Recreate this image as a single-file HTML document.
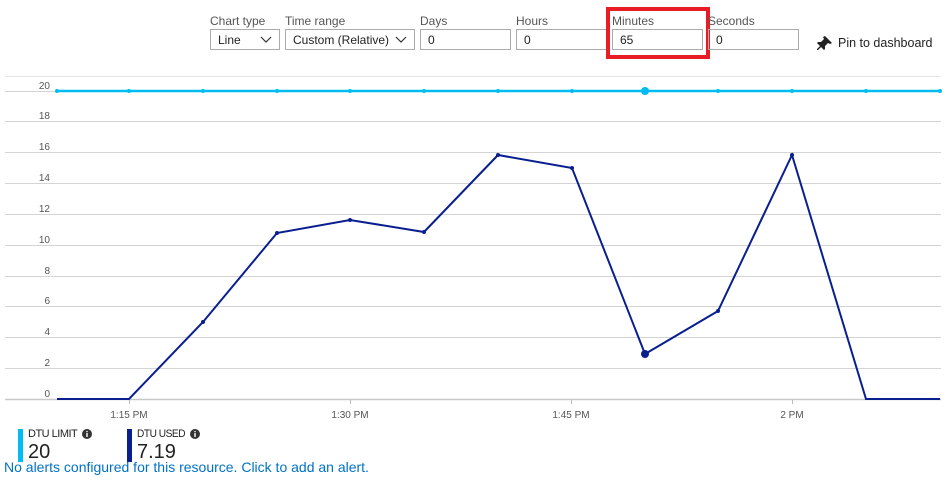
<!DOCTYPE html>
<html><head><meta charset="utf-8"><style>
body{margin:0;width:946px;height:486px;background:#fff;font-family:"Liberation Sans",sans-serif;position:relative;overflow:hidden}
.lbl{position:absolute;top:14px;font-size:12px;color:#555}
.box{position:absolute;top:29px;height:21px;border:1px solid #ababab;box-sizing:border-box;font-size:12px;color:#222;padding:3px 0 0 7px}
.chev{position:absolute;right:7px;top:4px}
</style></head><body>
<div class="lbl" style="left:210px">Chart type</div>
<div class="box" style="left:210px;width:70px">Line<svg class="chev" width="12" height="10"><path d="M1 3l5 5 5-5" fill="none" stroke="#333" stroke-width="1.2"/></svg></div>
<div class="lbl" style="left:285px">Time range</div>
<div class="box" style="left:285px;width:130px">Custom (Relative)<svg class="chev" width="12" height="10"><path d="M1 3l5 5 5-5" fill="none" stroke="#333" stroke-width="1.2"/></svg></div>
<div class="lbl" style="left:420px">Days</div>
<div class="box" style="left:420px;width:91px">0</div>
<div class="lbl" style="left:516px">Hours</div>
<div class="box" style="left:516px;width:91px">0</div>
<div class="lbl" style="left:612px">Minutes</div>
<div class="box" style="left:612px;width:91px">65</div>
<div style="position:absolute;left:606px;top:7px;width:104px;height:52px;border:4px solid #e81c24;box-sizing:border-box"></div>
<div class="lbl" style="left:708px">Seconds</div>
<div class="box" style="left:708px;width:91px">0</div>
<svg style="position:absolute;left:816px;top:34px" width="18" height="18" viewBox="0 0 18 18"><path d="M9 2l7 7-2 1-2-1-3 3 0 3-1 1-3-3-3 3-1 0 0-1 3-3-3-3 1-1 3 0 3-3-1-2z" fill="#222"/></svg>
<div style="position:absolute;left:838px;top:36px;font-size:12.5px;color:#222">Pin to dashboard</div>
<svg style="position:absolute;left:0;top:0" width="946" height="486">
<g stroke="#d4d4d4" stroke-width="1">
<line x1="5" y1="76.5" x2="941" y2="76.5" stroke="#e4e4e4"/>
<line x1="5" y1="91.5" x2="941" y2="91.5"/><line x1="5" y1="121.5" x2="941" y2="121.5"/><line x1="5" y1="152.5" x2="941" y2="152.5"/><line x1="5" y1="183.5" x2="941" y2="183.5"/><line x1="5" y1="214.5" x2="941" y2="214.5"/><line x1="5" y1="245.5" x2="941" y2="245.5"/><line x1="5" y1="276.5" x2="941" y2="276.5"/><line x1="5" y1="306.5" x2="941" y2="306.5"/><line x1="5" y1="337.5" x2="941" y2="337.5"/><line x1="5" y1="368.5" x2="941" y2="368.5"/>
</g>
<line x1="5" y1="399.5" x2="941" y2="399.5" stroke="#c8c8c8" stroke-width="1.5"/>
<g stroke="#bbb"><line x1="129.5" y1="400" x2="129.5" y2="404"/><line x1="350.5" y1="400" x2="350.5" y2="404"/><line x1="571.5" y1="400" x2="571.5" y2="404"/><line x1="792.5" y1="400" x2="792.5" y2="404"/></g>
<g font-size="10" fill="#555" text-anchor="end" font-family="Liberation Sans,sans-serif">
<text x="50" y="89">20</text><text x="50" y="119">18</text><text x="50" y="150">16</text><text x="50" y="181">14</text><text x="50" y="212">12</text><text x="50" y="243">10</text><text x="50" y="274">8</text><text x="50" y="304">6</text><text x="50" y="335">4</text><text x="50" y="366">2</text><text x="50" y="397">0</text>
</g>
<g font-size="10" fill="#555" text-anchor="middle" font-family="Liberation Sans,sans-serif">
<text x="129" y="418">1:15 PM</text><text x="350" y="418">1:30 PM</text><text x="571" y="418">1:45 PM</text><text x="792" y="418">2 PM</text>
</g>
<line x1="57" y1="91" x2="941" y2="91" stroke="#00bcf2" stroke-width="2.5"/>
<g fill="#00bcf2"><circle cx="57" cy="91" r="2"/><circle cx="129" cy="91" r="2"/><circle cx="203" cy="91" r="2"/><circle cx="277" cy="91" r="2"/><circle cx="350" cy="91" r="2"/><circle cx="424" cy="91" r="2"/><circle cx="498" cy="91" r="2"/><circle cx="572" cy="91" r="2"/><circle cx="645" cy="91" r="4"/><circle cx="718" cy="91" r="2"/><circle cx="792" cy="91" r="2"/><circle cx="866" cy="91" r="2"/><circle cx="940" cy="91" r="2"/></g>
<polyline fill="none" stroke="#0a1f8f" stroke-width="2" points="57,399 129,399 203,322 277,233 350,220 424,232 498,155 572,168 645,354 718,311 792,155 866,399 940,399"/>
<g fill="#0a1f8f"><circle cx="203" cy="322" r="2"/><circle cx="277" cy="233" r="2"/><circle cx="350" cy="220" r="2"/><circle cx="424" cy="232" r="2"/><circle cx="498" cy="155" r="2"/><circle cx="572" cy="168" r="2"/><circle cx="645" cy="354" r="4"/><circle cx="718" cy="311" r="2"/><circle cx="792" cy="155" r="2"/></g>
<rect x="18" y="429" width="5" height="33" fill="#00bcf2"/>
<rect x="127" y="429" width="5" height="33" fill="#0a1f8f"/>
<circle cx="87" cy="434" r="5" fill="#333"/><rect x="86.3" y="433" width="1.4" height="4" fill="#fff"/><rect x="86.3" y="431" width="1.4" height="1.2" fill="#fff"/>
<circle cx="195" cy="434" r="5" fill="#333"/><rect x="194.3" y="433" width="1.4" height="4" fill="#fff"/><rect x="194.3" y="431" width="1.4" height="1.2" fill="#fff"/>
</svg>
<div style="position:absolute;left:28px;top:428px;font-size:11px;color:#222;letter-spacing:-0.5px">DTU LIMIT</div>
<div style="position:absolute;left:28px;top:441px;font-size:20px;color:#222">20</div>
<div style="position:absolute;left:137px;top:428px;font-size:11px;color:#222;letter-spacing:-0.5px;transform:scaleX(0.92);transform-origin:left">DTU USED</div>
<div style="position:absolute;left:137px;top:441px;font-size:20px;color:#222">7.19</div>
<div style="position:absolute;left:4px;top:459px;font-size:14px;color:#0072c6">No alerts configured for this resource. Click to add an alert.</div>
</body></html>
